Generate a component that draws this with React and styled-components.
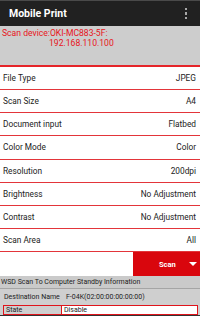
import React from "react";
import styled, { createGlobalStyle } from "styled-components";

const settings = [
  { label: "File Type", value: "JPEG" },
  { label: "Scan Size", value: "A4" },
  { label: "Document input", value: "Flatbed" },
  { label: "Color Mode", value: "Color" },
  { label: "Resolution", value: "200dpi" },
  { label: "Brightness", value: "No Adjustment" },
  { label: "Contrast", value: "No Adjustment" },
  { label: "Scan Area", value: "All" },
];

export default function App() {
  return (
    <>
      <GlobalStyle />
      <Screen>
        <TopBar>
          <Title>Mobile Print</Title>
          <MenuDots>
            <Dot />
            <Dot />
            <Dot />
          </MenuDots>
        </TopBar>

        <DevicePanel>
          <DeviceLine>Scan device:OKI-MC883-5F:</DeviceLine>
          <AddressLine>192.168.110.100</AddressLine>
        </DevicePanel>

        <SettingsList>
          {settings.map((s) => (
            <SettingRow key={s.label}>
              <span>{s.label}</span>
              <span>{s.value}</span>
            </SettingRow>
          ))}
        </SettingsList>

        <ScanBar>
          <ScanButton>
            <ScanLabel>Scan</ScanLabel>
            <Caret viewBox="0 0 8 4">
              <path d="M0 0 L8 0 L4 4 Z" fill="#fff" />
            </Caret>
          </ScanButton>
        </ScanBar>

        <InfoHeader>WSD Scan To Computer Standby Information</InfoHeader>
        <InfoRow>
          <InfoKey>Destination Name</InfoKey>
          <span>F-04K(02:00:00:00:00:00)</span>
        </InfoRow>
        <StateRow>
          <StateCell>State</StateCell>
          <StateCell $white>Disable</StateCell>
        </StateRow>
      </Screen>
    </>
  );
}

const GlobalStyle = createGlobalStyle`
  body {
    margin: 0;
    font-family: Roboto, "Liberation Sans", sans-serif;
    background: #ffffff;
  }
`;

const Screen = styled.div`
  display: flex;
  flex-direction: column;
  width: 200px;
  height: 316px;
  overflow: hidden;
  border-bottom: 1px solid #333;
  box-sizing: border-box;
`;

const TopBar = styled.div`
  display: flex;
  align-items: center;
  justify-content: space-between;
  height: 26px;
  padding: 0 13px 0 9px;
  box-sizing: border-box;
  background: #212121;
  border-top: 1px solid #4a4a4a;
`;

const Title = styled.h1`
  margin: 0;
  font-size: 10.5px;
  font-weight: 700;
  color: #ffffff;
`;

const MenuDots = styled.div`
  display: flex;
  flex-direction: column;
  gap: 2px;
`;

const Dot = styled.span`
  width: 2.5px;
  height: 2.5px;
  background: #a8a8a8;
`;

const DevicePanel = styled.div`
  height: 39px;
  padding: 2px 2px 0;
  box-sizing: border-box;
  background: #cdcdcd;
  color: #e8141b;
  font-size: 8.6px;
  line-height: 10px;
  white-space: nowrap;
`;

const DeviceLine = styled.div``;

const AddressLine = styled.div`
  padding-left: 47px;
`;

const SettingsList = styled.div`
  border-top: 2px solid #e5252a;
`;

const SettingRow = styled.div`
  display: flex;
  align-items: center;
  justify-content: space-between;
  height: 23.125px;
  padding: 0 4px 0 3px;
  box-sizing: border-box;
  border-bottom: 1px solid #e3353a;
  font-size: 8.3px;
  color: #222222;
`;

const ScanBar = styled.div`
  display: flex;
  justify-content: flex-end;
  height: 24px;
  background: #ffffff;
`;

const ScanButton = styled.div`
  display: flex;
  align-items: center;
  width: 67px;
  padding-left: 26px;
  box-sizing: border-box;
  background: #d9060d;
`;

const ScanLabel = styled.span`
  font-size: 7.5px;
  font-weight: 700;
  color: #ffffff;
`;

const Caret = styled.svg`
  width: 8px;
  height: 4px;
  margin-left: 13px;
`;

const InfoHeader = styled.div`
  display: flex;
  align-items: center;
  height: 12px;
  padding-left: 1px;
  background: #cacaca;
  border-bottom: 1px solid #a5a5a5;
  font-size: 7px;
  color: #222222;
  white-space: nowrap;
`;

const InfoRow = styled.div`
  display: flex;
  align-items: center;
  height: 16px;
  padding-left: 4px;
  background: #cfcfcf;
  font-size: 7px;
  color: #222222;
  white-space: nowrap;
`;

const InfoKey = styled.span`
  width: 62px;
`;

const StateRow = styled.div`
  display: flex;
  flex: 1;
  padding: 0 2px 0 3px;
  background: #cfcfcf;
`;

const StateCell = styled.div`
  display: flex;
  align-items: center;
  flex: ${(p) => (p.$white ? 1 : "0 0 59px")};
  padding-left: 2px;
  box-sizing: border-box;
  border: 1px solid #e0141b;
  border-left-width: ${(p) => (p.$white ? "0" : "1px")};
  background: ${(p) => (p.$white ? "#ffffff" : "#cfcfcf")};
  font-size: 7px;
  color: #222222;
`;
